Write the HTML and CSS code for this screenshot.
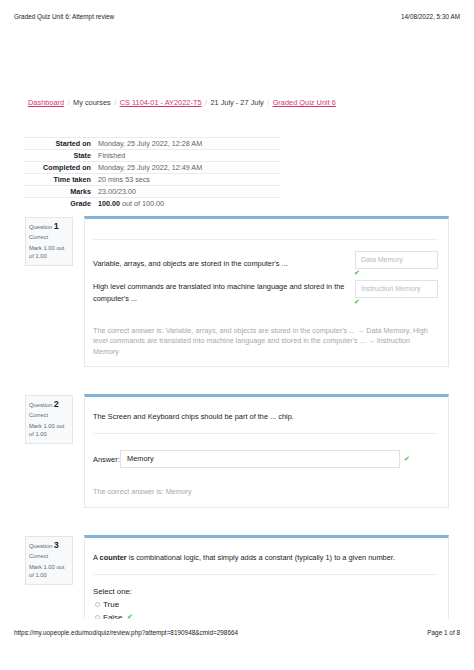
FILE: index.html
```html
<!DOCTYPE html>
<html>
<head>
<meta charset="utf-8">
<title>Graded Quiz Unit 6: Attempt review</title>
<link rel="stylesheet" href="styles.css">
</head>
<body>
<div class="page">
  <div class="top">
    <span>Graded Quiz Unit 6: Attempt review</span>
    <span>14/08/2022, 5:30 AM</span>
  </div>
  <div class="main">
    <nav class="crumbs">
      <a href="#">Dashboard</a><span class="sep">/</span><span>My courses</span><span class="sep">/</span><a href="#">CS 1104-01 - AY2022-T5</a><span class="sep">/</span><span>21 July - 27 July</span><span class="sep">/</span><a href="#">Graded Quiz Unit 6</a>
    </nav>
    <table class="summary">
      <tr><th>Started on</th><td>Monday, 25 July 2022, 12:28 AM</td></tr>
      <tr><th>State</th><td>Finished</td></tr>
      <tr><th>Completed on</th><td>Monday, 25 July 2022, 12:49 AM</td></tr>
      <tr><th>Time taken</th><td>20 mins 53 secs</td></tr>
      <tr><th>Marks</th><td>23.00/23.00</td></tr>
      <tr><th>Grade</th><td><b>100.00</b> out of 100.00</td></tr>
    </table>

    <div class="que">
      <div class="info">
        <div class="qno">Question <b>1</b></div>
        <div class="istate">Correct</div>
        <div class="imark">Mark 1.00 out of 1.00</div>
      </div>
      <div class="content">
        <div class="qtext empty"></div>
        <div class="match">
          <div class="mrow">
            <div class="mtext">Variable, arrays, and objects are stored in the computer's ...</div>
            <div class="mctl"><div class="sel">Data Memory</div><span class="tick">&#10004;</span></div>
          </div>
          <div class="mrow">
            <div class="mtext">High level commands are translated into machine language and stored in the computer's ...</div>
            <div class="mctl"><div class="sel">Instruction Memory</div><span class="tick">&#10004;</span></div>
          </div>
        </div>
        <div class="right">The correct answer is: Variable, arrays, and objects are stored in the computer's ... &#8594; Data Memory, High level commands are translated into machine language and stored in the computer's ... &#8594; Instruction Memory</div>
      </div>
    </div>

    <div class="que">
      <div class="info">
        <div class="qno">Question <b>2</b></div>
        <div class="istate">Correct</div>
        <div class="imark">Mark 1.00 out of 1.00</div>
      </div>
      <div class="content">
        <div class="qtext">The Screen and Keyboard chips should be part of the ... chip.</div>
        <div class="ans">
          <span class="alabel">Answer:</span>
          <div class="field">Memory</div>
          <span class="tick">&#10004;</span>
        </div>
        <div class="right r2">The correct answer is: Memory</div>
      </div>
    </div>

    <div class="que">
      <div class="info">
        <div class="qno">Question <b>3</b></div>
        <div class="istate">Correct</div>
        <div class="imark">Mark 1.00 out of 1.00</div>
      </div>
      <div class="content">
        <div class="qtext">A <b>counter</b> is combinational logic, that simply adds a constant (typically 1) to a given number.</div>
        <div class="choice">
          <div class="prompt">Select one:</div>
          <div class="opt"><span class="radio"></span>True</div>
          <div class="opt"><span class="radio"></span>False <span class="tick">&#10004;</span></div>
        </div>
      </div>
    </div>
  </div>
  <div class="foot">
    <span>https://my.uopeople.edu/mod/quiz/review.php?attempt=8190948&amp;cmid=298664</span>
    <span>Page 1 of 8</span>
  </div>
</div>
</body>
</html>
```

FILE: styles.css
```css
* { box-sizing: border-box; }
html, body { margin: 0; padding: 0; background: #fff; }
body {
  font-family: "Liberation Sans", Arial, sans-serif;
  color: #1d2125;
}
.page {
  width: 474px;
  height: 670px;
  display: flex;
  flex-direction: column;
}
.top {
  height: 32px;
  padding: 0 14px;
  display: flex;
  justify-content: space-between;
  align-items: center;
  font-size: 6.4px;
  color: #222;
}
.main {
  height: 587px;
  overflow: hidden;
  padding: 0 24px;
}
.foot {
  height: 26px;
  padding: 0 14px;
  display: flex;
  justify-content: space-between;
  align-items: center;
  font-size: 6.4px;
  color: #222;
}
.crumbs {
  margin: 65px 0 0 4px;
  height: 12px;
  line-height: 12px;
  font-size: 7.4px;
  color: #343a40;
  display: flex;
  align-items: center;
}
.crumbs a { color: #d6336c; text-decoration: underline; }
.crumbs .sep { color: #ccd1d6; margin: 0 3.4px; }
.summary {
  margin-top: 28px;
  margin-bottom: 6px;
  width: 256px;
  border-collapse: collapse;
  font-size: 7.2px;
}
.summary tr { height: 12px; border-top: 1px solid #e9ecef; }
.summary th {
  width: 71px;
  text-align: right;
  font-weight: bold;
  padding: 0 4px 0 0;
  color: #1d2125;
  white-space: nowrap;
}
.summary td { padding: 0 0 0 3px; color: #5b6269; }
.summary td b { color: #1d2125; }

.que {
  display: flex;
  align-items: flex-start;
  gap: 11px;
  margin: 0 0 27px;
}
.info {
  width: 48px;
  margin: 1px 0 0 1px;
  padding: 4px 3px 5px;
  background: #f8f9fa;
  border: 1px solid #e3e6e9;
  font-size: 5.8px;
  color: #60676e;
  line-height: 8px;
  flex-shrink: 0;
}
.info .qno b { font-size: 9px; color: #1d2125; }
.info .istate { margin-top: 2px; }
.info .imark { margin-top: 3px; line-height: 8px; }
.content {
  width: 365px;
  border: 1px solid #e6e9ec;
  border-top: 3px solid #82b2d9;
  padding: 0 10px 9px 8px;
  font-size: 7.4px;
  line-height: 11px;
}
.qtext {
  padding: 14px 0 11px;
  border-bottom: 1px solid #eceef0;
}
.qtext.empty { padding: 10px 0 10px; }
.match { margin-top: 11px; }
.mrow {
  display: flex;
  align-items: center;
  justify-content: space-between;
  margin-bottom: 3px;
}
.mtext { width: 255px; line-height: 12px; }
.mctl { width: 83px; display: flex; flex-direction: column; }
.sel {
  height: 18px;
  border: 1px solid #dfe3e7;
  padding: 0 5px;
  line-height: 16px;
  color: #b5bcc3;
  font-size: 7px;
}
.tick { color: #3cc43c; font-size: 6.5px; line-height: 8px; }
.mctl .tick { margin-left: -1px; }
.right {
  margin-top: 20px;
  margin-right: 7px;
  color: #a2a9b0;
  line-height: 10.5px;
  font-size: 7.2px;
}
.right.r2 { margin-top: 19px; }
.ans {
  margin-top: 16px;
  display: flex;
  align-items: center;
}
.alabel { width: 27px; }
.field {
  width: 280px;
  height: 18px;
  border: 1px solid #dfe3e7;
  padding: 0 6px;
  line-height: 16px;
}
.ans .tick { margin-left: 4px; }
.choice { margin-top: 11px; }
.prompt { line-height: 11px; margin-bottom: 1px; font-size: 7.8px; }
.opt { display: flex; align-items: center; line-height: 13px; font-size: 8px; }
.radio {
  width: 5px; height: 5px;
  border: 0.6px solid #b8bec4;
  border-radius: 50%;
  margin: 0 3px 0 2px;
}
.opt .tick { margin-left: 4px; }
```
